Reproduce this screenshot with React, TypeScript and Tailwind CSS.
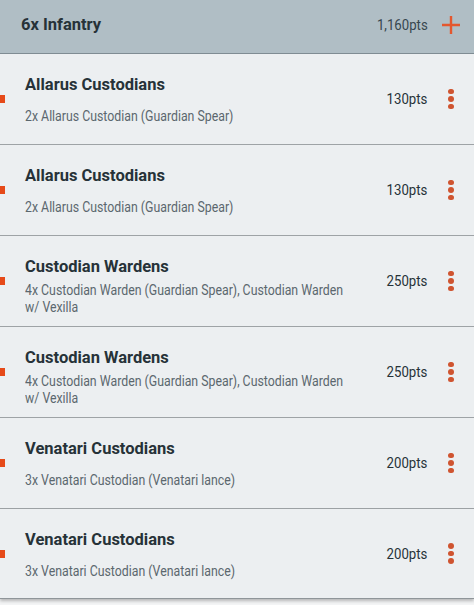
import React from "react";

type Unit = { name: string; detail: string; pts: number };

const units: Unit[] = [
  { name: "Allarus Custodians", detail: "2x Allarus Custodian (Guardian Spear)", pts: 130 },
  { name: "Allarus Custodians", detail: "2x Allarus Custodian (Guardian Spear)", pts: 130 },
  {
    name: "Custodian Wardens",
    detail: "4x Custodian Warden (Guardian Spear), Custodian Warden w/ Vexilla",
    pts: 250,
  },
  {
    name: "Custodian Wardens",
    detail: "4x Custodian Warden (Guardian Spear), Custodian Warden w/ Vexilla",
    pts: 250,
  },
  { name: "Venatari Custodians", detail: "3x Venatari Custodian (Venatari lance)", pts: 200 },
  { name: "Venatari Custodians", detail: "3x Venatari Custodian (Venatari lance)", pts: 200 },
];

// condensed look: Roboto squeezed sideways
const Pts = ({ children, className }: { children: React.ReactNode; className?: string }) => (
  <span className={`inline-block origin-right scale-x-[0.88] text-[15px] ${className ?? ""}`}>{children}</span>
);

const Kebab = () => (
  <div className="flex flex-col items-center gap-[2px] w-5">
    <span className="block w-[5.5px] h-[5.5px] rounded-full bg-[#cf5430]" />
    <span className="block w-[5.5px] h-[5.5px] rounded-full bg-[#cf5430]" />
    <span className="block w-[5.5px] h-[5.5px] rounded-full bg-[#cf5430]" />
  </div>
);

const Plus = () => (
  <svg width="20" height="20" viewBox="0 0 20 20">
    <path d="M10 1v18M1 10h18" stroke="#e4572e" strokeWidth="2.4" />
  </svg>
);

const Row = ({ u, last }: { u: Unit; last?: boolean }) => (
  <div
    className={`relative flex items-center bg-[#eceff1] border-b ${
      last ? "h-[90px] border-[#8f9599] shadow-[0_2px_3px_rgba(0,0,0,0.25)]" : "h-[91px] border-[#9ea3a6]"
    }`}
  >
    <span className="absolute left-0 top-1/2 -translate-y-1/2 w-[5px] h-[8px] bg-[#e64a19]" />
    <div className="flex-1 self-stretch flex flex-col pl-[25px] pt-[21px] pb-[6px] min-w-0">
      <div className="text-[16.5px] font-bold text-[#263238] leading-5">{u.name}</div>
      <div className="flex-1 flex items-center">
        <div className="w-[375px] shrink-0 origin-left scale-x-[0.88] text-[14px] leading-[17px] text-[#5b676e]">
          {u.detail}
        </div>
      </div>
    </div>
    <div className="text-[#263238] mr-[14px]">
      <Pts>{u.pts}pts</Pts>
    </div>
    <div className="mr-[13px]">
      <Kebab />
    </div>
  </div>
);

export default function App() {
  return (
    <div className="w-[474px] h-[605px] bg-[#f3f4f5] font-['Roboto',sans-serif] overflow-hidden">
      <div className="flex items-center h-[54px] pb-[3px] bg-[#b0bec5] border-b border-[#7f8c93]">
        <div className="flex-1 pl-[21px] text-[16.5px] font-bold text-[#263238]">6x Infantry</div>
        <div className="text-[#37474f] mr-[13px]">
          <Pts>1,160pts</Pts>
        </div>
        <div className="mr-[13px]">
          <Plus />
        </div>
      </div>
      {units.map((u, i) => (
        <Row key={i} u={u} last={i === units.length - 1} />
      ))}
    </div>
  );
}
